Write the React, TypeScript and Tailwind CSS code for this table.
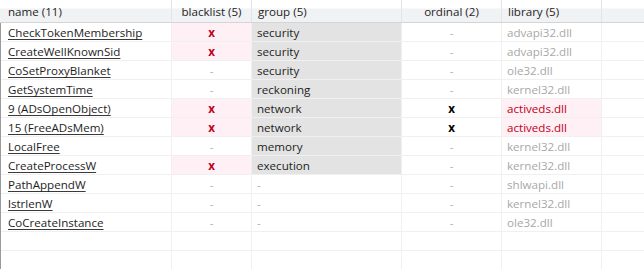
const rows = [
  { name: "CheckTokenMembership", bl: true, group: "security", ord: false, lib: "advapi32.dll", libBad: false },
  { name: "CreateWellKnownSid", bl: true, group: "security", ord: false, lib: "advapi32.dll", libBad: false },
  { name: "CoSetProxyBlanket", bl: false, group: "security", ord: false, lib: "ole32.dll", libBad: false },
  { name: "GetSystemTime", bl: false, group: "reckoning", ord: false, lib: "kernel32.dll", libBad: false },
  { name: "9 (ADsOpenObject)", bl: true, group: "network", ord: true, lib: "activeds.dll", libBad: true },
  { name: "15 (FreeADsMem)", bl: true, group: "network", ord: true, lib: "activeds.dll", libBad: true },
  { name: "LocalFree", bl: false, group: "memory", ord: false, lib: "kernel32.dll", libBad: false },
  { name: "CreateProcessW", bl: true, group: "execution", ord: false, lib: "kernel32.dll", libBad: false },
  { name: "PathAppendW", bl: false, group: "", ord: false, lib: "shlwapi.dll", libBad: false },
  { name: "lstrlenW", bl: false, group: "", ord: false, lib: "kernel32.dll", libBad: false },
  { name: "CoCreateInstance", bl: false, group: "", ord: false, lib: "ole32.dll", libBad: false },
];

const cell = "h-full border-r border-[#f0f0f0] flex items-center pt-[2px] shrink-0";

export default function App() {
  return (
    <div className="w-[644px] h-[269px] overflow-hidden bg-white text-[11.6px] text-[#1e1e1e]" style={{ fontFamily: '"Open Sans", sans-serif' }}>
      <div className="flex h-[23px] border-b border-[#d5d5d5] bg-[linear-gradient(#ffffff_0px,#ffffff_8px,#f1f2f4_9px,#f1f2f4_100%)]">
        <div className="w-[172px] h-full border-r border-[#e3e4e6] flex items-center pt-[1px] pl-[8px] shrink-0">name (11)</div>
        <div className="w-[80px] h-full border-r border-[#e3e4e6] flex items-center pt-[1px] justify-center shrink-0">blacklist (5)</div>
        <div className="w-[150px] h-full border-r border-[#e3e4e6] flex items-center pt-[1px] pl-[6px] shrink-0">group (5)</div>
        <div className="w-[100px] h-full border-r border-[#e3e4e6] flex items-center pt-[1px] justify-center shrink-0">ordinal (2)</div>
        <div className="w-[100px] h-full border-r border-[#e3e4e6] flex items-center pt-[1px] pl-[6px] shrink-0">library (5)</div>
        <div className="flex-1" />
      </div>
      <div className="border-l border-[#9a9a9a]">
        {rows.map((r) => (
          <div key={r.name} className="flex h-[19px] border-b border-[#f0f0f0]">
            <div className={`${cell} w-[171px] pl-[7px]`}>
              <span className="underline decoration-[#3a3a3a] underline-offset-[2px]">{r.name}</span>
            </div>
            <div className={`${cell} w-[80px] justify-center ${r.bl ? "bg-[#fff0f5]" : ""}`}>
              {r.bl ? <span className="font-bold text-[#c00020]">x</span> : <span className="text-[#b0b0b0]">-</span>}
            </div>
            <div className={`${cell} w-[150px] pl-[5px] ${r.group ? "bg-[#e3e3e3]" : ""}`}>
              {r.group ? r.group : <span className="text-[#b0b0b0]">-</span>}
            </div>
            <div className={`${cell} w-[100px] justify-center`}>
              {r.ord ? <span className="font-bold text-black">x</span> : <span className="text-[#b0b0b0]">-</span>}
            </div>
            <div className={`${cell} w-[100px] pl-[5px] ${r.libBad ? "bg-[#fff0f5] text-[#c00020]" : "text-[#a8a8a8]"}`}>
              {r.lib}
            </div>
            <div className="flex-1" />
          </div>
        ))}
        {[0, 1].map((i) => (
          <div key={i} className="flex h-[19px] border-b border-[#f0f0f0]">
            <div className={`${cell} w-[171px]`} />
            <div className={`${cell} w-[80px]`} />
            <div className={`${cell} w-[150px]`} />
            <div className={`${cell} w-[100px]`} />
            <div className={`${cell} w-[100px]`} />
            <div className="flex-1" />
          </div>
        ))}
      </div>
    </div>
  );
}
